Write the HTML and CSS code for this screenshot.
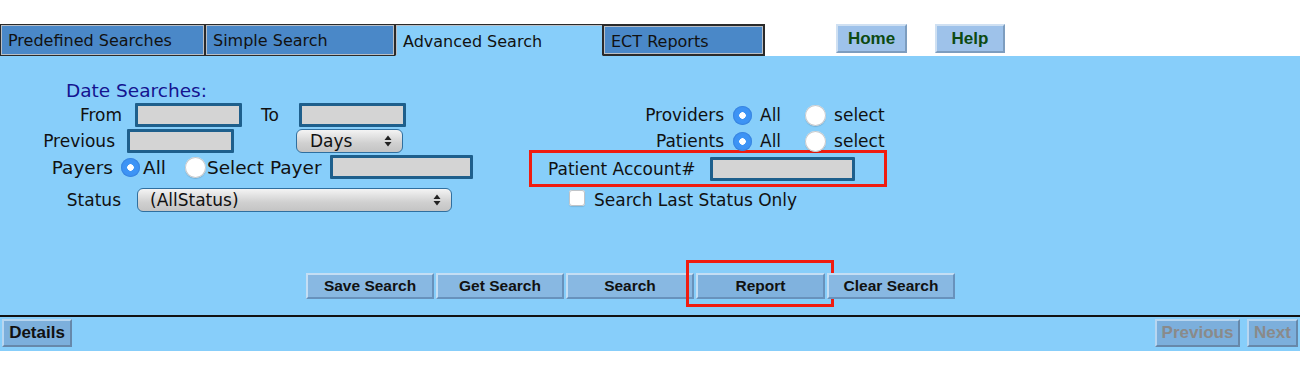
FILE: index.html
```html
<!DOCTYPE html>
<html>
<head>
<meta charset="utf-8">
<link rel="stylesheet" href="styles.css">
</head>
<body>
<div class="tabbar">
  <div class="tabs">
    <div class="tab tab-1">Predefined Searches</div>
    <div class="tab tab-2">Simple Search</div>
    <div class="tab tab-3 active">Advanced Search</div>
    <div class="tab tab-4">ECT Reports</div>
  </div>
  <div class="topbtn home">Home</div>
  <div class="topbtn help">Help</div>
</div>

<div class="panel">
  <div class="form">
    <div class="col-left">
      <div class="row title-row"><span class="title">Date Searches:</span></div>
      <div class="row">
        <span class="lbl lbl-from">From</span>
        <span class="field f-date"></span>
        <span class="lbl lbl-to">To</span>
        <span class="field f-date"></span>
      </div>
      <div class="row">
        <span class="lbl lbl-prev">Previous</span>
        <span class="field f-date"></span>
        <span class="select sel-days"><span>Days</span>
          <svg class="arrows" width="8" height="12" viewBox="0 0 8 12"><path d="M4 0.5 L7.5 5 L0.5 5 Z M4 11.5 L7.5 7 L0.5 7 Z" fill="#222"/></svg>
        </span>
      </div>
      <div class="row payers-row">
        <span class="lbl lbl-payers">Payers</span>
        <span class="radio on r-payers"></span>
        <span class="txt t-all">All</span>
        <span class="radio off r-select"></span>
        <span class="txt t-selpayer">Select Payer</span>
        <span class="field f-payer"></span>
      </div>
      <div class="row status-row">
        <span class="lbl lbl-status">Status</span>
        <span class="select sel-status"><span>(AllStatus)</span>
          <svg class="arrows" width="8" height="12" viewBox="0 0 8 12"><path d="M4 0.5 L7.5 5 L0.5 5 Z M4 11.5 L7.5 7 L0.5 7 Z" fill="#222"/></svg>
        </span>
      </div>
    </div>

    <div class="col-right">
      <div class="row">
        <span class="lbl lbl-right">Providers</span>
        <span class="radio on r-right"></span>
        <span class="txt t-all2">All</span>
        <span class="radio off r-right2"></span>
        <span class="txt t-select">select</span>
      </div>
      <div class="row">
        <span class="lbl lbl-right">Patients</span>
        <span class="radio on r-right"></span>
        <span class="txt t-all2">All</span>
        <span class="radio off r-right2"></span>
        <span class="txt t-select">select</span>
      </div>
      <div class="account-box">
        <span class="lbl lbl-account">Patient Account#</span>
        <span class="field f-account"></span>
      </div>
      <div class="row check-row">
        <span class="checkbox"></span>
        <span class="txt t-check">Search Last Status Only</span>
      </div>
    </div>
  </div>

  <div class="actions">
    <div class="btn">Save Search</div>
    <div class="btn">Get Search</div>
    <div class="btn">Search</div>
    <div class="btn report">Report<span class="highlight"></span></div>
    <div class="btn">Clear Search</div>
  </div>
</div>

<div class="footer">
  <div class="fbtn details">Details</div>
  <div class="spacer"></div>
  <div class="fbtn disabled prev">Previous</div>
  <div class="fbtn disabled next">Next</div>
</div>
</body>
</html>
```

FILE: styles.css
```css
* { box-sizing: border-box; }
html, body {
  margin: 0;
  padding: 0;
  background: #ffffff;
  width: 1300px;
  height: 376px;
  overflow: hidden;
  font-family: "DejaVu Sans", Verdana, sans-serif;
  color: #111;
}

/* ---------- tab bar ---------- */
.tabbar {
  display: flex;
  align-items: flex-start;
  margin-top: 24px;
  height: 32px;
}
.tabs {
  display: flex;
  height: 32px;
}
.tab {
  height: 32px;
  border: 1px solid #2a2a2a;
  box-shadow: inset 1px 1px 0 #b9bfc6, inset -1px -1px 0 #b9bfc6;
  background: #4a88c8;
  font-size: 16px;
  line-height: 31px;
  padding-left: 7px;
  color: #111;
  white-space: nowrap;
}
.tab-1 { width: 205px; }
.tab-2 { width: 190px; }
.tab-3 { width: 208px; }
.tab-4 { width: 162px; border-width: 2px 2px 2px 1px; }
.tab.active {
  background: #87cefa;
  border-bottom-color: #87cefa;
  box-shadow: inset 1px 1px 0 #b9bfc6;
  line-height: 34px;
}

.topbtn {
  height: 29px;
  background: #9ec2ea;
  border-top: 2px solid #cfe0f2;
  border-left: 2px solid #cfe0f2;
  border-right: 2px solid #7d9dbf;
  border-bottom: 2px solid #7d9dbf;
  font-family: "Liberation Sans", Arial, sans-serif;
  font-weight: bold;
  font-size: 17px;
  line-height: 25px;
  color: #0c4a12;
  text-align: center;
}
.home { width: 71px; margin-left: 71px; }
.help { width: 70px; margin-left: 28px; }

/* ---------- panel ---------- */
.panel {
  background: #87cefa;
  height: 259px;
  padding-top: 22px;
}
.form {
  display: flex;
}
.col-left { width: 529px; }
.col-right { padding-top: 24px; width: 400px; }

.row {
  display: flex;
  align-items: center;
  height: 26px;
  font-size: 17px;
  white-space: nowrap;
}
.title-row { height: 24px; }
.title {
  margin-left: 66px;
  font-size: 18.5px;
  color: #141490;
}
.lbl { display: inline-block; font-size: 17px; }
.lbl-from { width: 122px; text-align: right; margin-right: 13px; }
.lbl-to { width: 38px; margin-left: 19px; }
.lbl-prev { width: 115px; text-align: right; margin-right: 12px; }
.payers-row { font-size: 18.5px; }
.payers-row .lbl { font-size: 18.5px; }
.lbl-payers { width: 113px; text-align: right; }
.status-row { margin-top: 7px; }
.lbl-status { width: 121px; text-align: right; margin-right: 16px; }

.field {
  display: inline-block;
  height: 24px;
  background: #d4d4d4;
  border: 3px solid #1e5f8c;
  border-radius: 1px;
  flex: none;
}
.f-date { width: 107px; }
.f-payer { width: 143px; margin-left: 8px; }

.select {
  display: inline-flex;
  align-items: center;
  justify-content: space-between;
  height: 24px;
  border: 1px solid #2f6f9f;
  border-radius: 6px;
  background: linear-gradient(#f4f4f4, #d0d0d0 60%, #c4c4c4);
  font-size: 17px;
  color: #111;
}
.sel-days { width: 107px; margin-left: 62px; padding: 0 10px 0 13px; }
.sel-status { width: 315px; padding: 0 10px 0 12px; }
.arrows { display: block; }

.radio {
  display: inline-block;
  border-radius: 50%;
  flex: none;
}
.radio.on {
  width: 19px;
  height: 19px;
  background: radial-gradient(circle, #ffffff 0 3px, #3e95f6 3.5px, #3a8ff2 100%);
  box-shadow: inset 0 0 0 1px #3a86e0;
}
.radio.off {
  width: 21px;
  height: 21px;
  background: #ffffff;
  box-shadow: inset 0 0 0 1px #c4c8cc, 0 1px 1px rgba(0,0,0,0.15);
}
.r-payers { margin-left: 8px; }
.txt { display: inline-block; }
.t-all { margin-left: 3px; }
.r-select { margin-left: 19px; }
.t-selpayer { margin-left: 1px; }

.lbl-right { width: 195px; text-align: right; }
.r-right { margin-left: 9px; }
.t-all2 { margin-left: 8px; }
.r-right2 { margin-left: 24px; }
.t-select { margin-left: 8px; }

.account-box {
  display: flex;
  align-items: center;
  width: 358px;
  height: 37px;
  margin-top: -4px;
  border: 3px solid #f01c10;
  padding-left: 16px;
  white-space: nowrap;
}
.lbl-account { width: 162px; }
.f-account { width: 145px; height: 24px; }

.check-row { height: 26px; }
.checkbox {
  display: inline-block;
  width: 16px;
  height: 16px;
  margin-left: 40px;
  margin-top: -4px;
  background: #ffffff;
  border-radius: 3px;
  box-shadow: inset 0 0 0 1px #c0c4c8, 0 1px 1px rgba(0,0,0,0.12);
}
.t-check { margin-left: 9px; }

/* ---------- action buttons ---------- */
.actions {
  display: flex;
  gap: 2px;
  padding-left: 306px;
  margin-top: 60px;
}
.btn {
  position: relative;
  width: 128px;
  height: 26px;
  background: #88b8e2;
  border-top: 2px solid #c4def4;
  border-left: 2px solid #c4def4;
  border-right: 2px solid #6892bc;
  border-bottom: 2px solid #6892bc;
  font-family: "Liberation Sans", Arial, sans-serif;
  font-weight: bold;
  font-size: 15.5px;
  line-height: 22px;
  text-align: center;
  color: #111;
}
.btn.report { background: #80b2de; width: 129px; }
.highlight {
  position: absolute;
  left: -12px;
  top: -15px;
  right: -11px;
  bottom: -10px;
  border: 3px solid #f01c10;
  pointer-events: none;
}

/* ---------- footer ---------- */
.footer {
  display: flex;
  align-items: flex-start;
  height: 36px;
  background: #87cefa;
  border-top: 2px solid #111;
  padding-top: 2px;
}
.fbtn {
  height: 28px;
  background: #7cafdc;
  border-top: 2px solid #b8d6f0;
  border-left: 2px solid #b8d6f0;
  border-right: 2px solid #6688aa;
  border-bottom: 2px solid #6688aa;
  font-family: "Liberation Sans", Arial, sans-serif;
  font-weight: bold;
  font-size: 17px;
  line-height: 24px;
  text-align: center;
  color: #111;
}
.details { width: 70px; margin-left: 2px; }
.spacer { flex: 1; }
.disabled { color: #8a8a8a; }
.prev { width: 85px; }
.next { width: 51px; margin-left: 7px; margin-right: 2px; }
```
